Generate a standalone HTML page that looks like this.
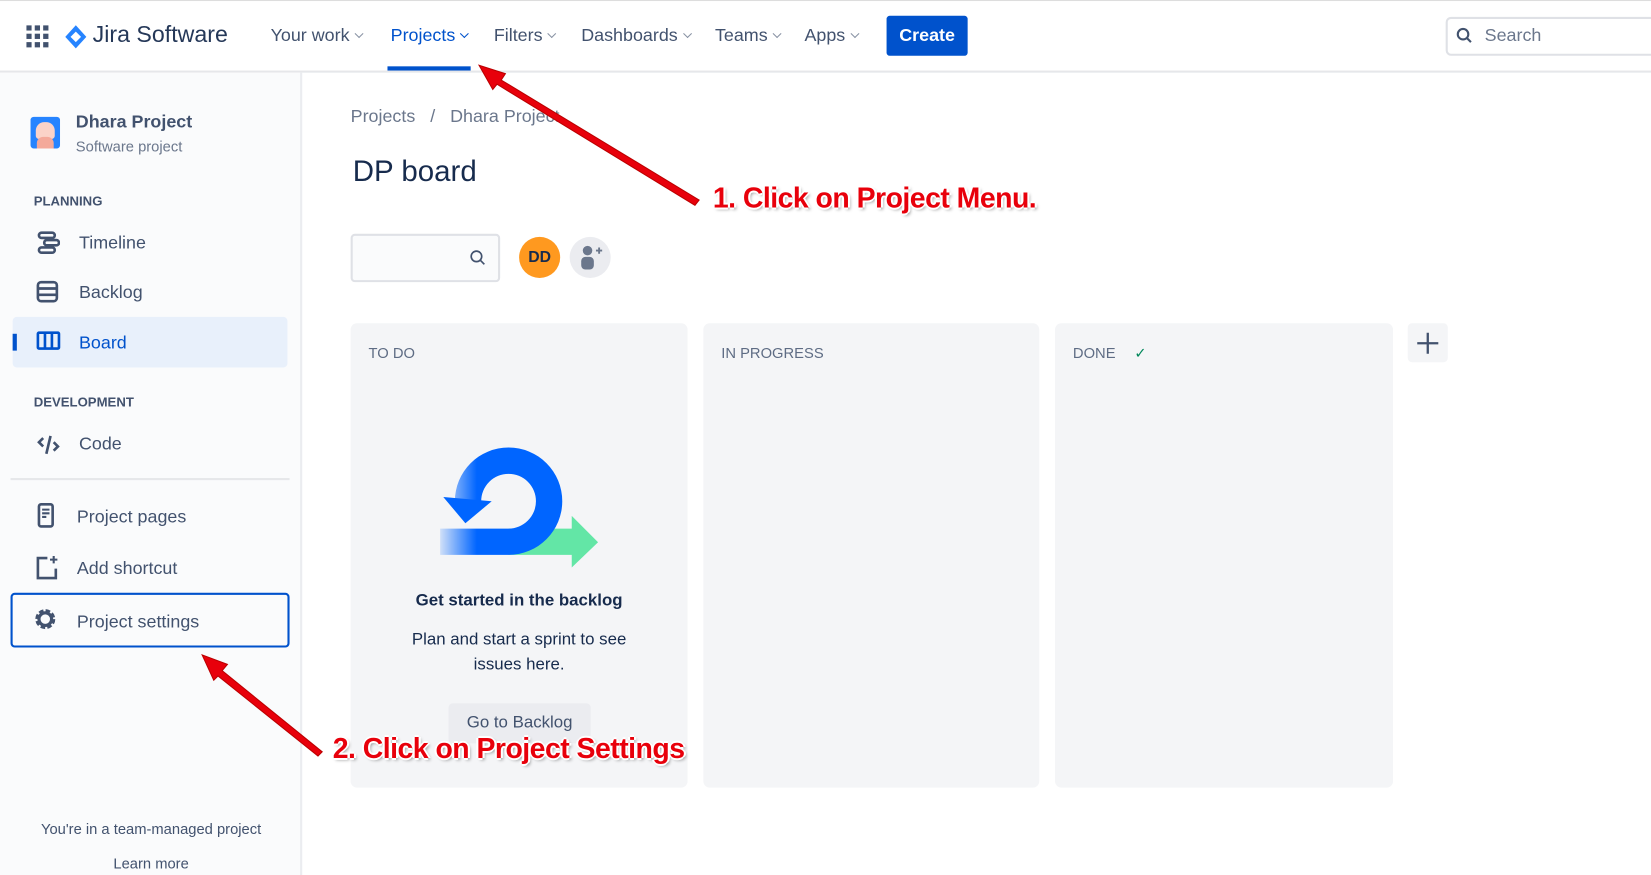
<!DOCTYPE html>
<html><head><meta charset="utf-8">
<style>
*{box-sizing:border-box;margin:0;padding:0}
html,body{width:1651px;height:875px;overflow:hidden;background:#fff}
#w{position:absolute;left:0;top:0;width:1568px;height:831px;transform:scale(1.05293);transform-origin:0 0;font-family:"Liberation Sans",sans-serif;color:#172b4d}
.a{position:absolute;white-space:nowrap}
.nav{font-size:17px;color:#42526e;top:24px}
.chev{display:inline-block;width:6px;height:6px;border-right:1.5px solid #8993a4;border-bottom:1.5px solid #8993a4;transform:rotate(45deg);margin-left:6px;position:relative;top:-4px}
.side{font-size:17px;color:#42526e}
.hd{font-size:12.5px;font-weight:bold;color:#42526e}
.col{position:absolute;top:307px;height:441px;background:#f4f5f7;border-radius:6px}
.colt{position:absolute;top:20px;left:17px;font-size:14px;color:#5e6c84}
.red{font-family:"Liberation Sans",sans-serif;font-weight:bold;font-size:27px;color:#e8000b;text-shadow:-2px 0 #fff,2px 0 #fff,0 -2px #fff,0 2px #fff,2px 2px 3px rgba(0,0,0,.4);letter-spacing:-0.5px}
</style></head><body><div id="w">
<div class="a" style="left:0;top:0;width:1568px;height:1px;background:#ddd"></div>
<div class="a" style="left:0;top:67px;width:1568px;height:2px;background:#e6e7ea"></div>
<svg class="a" style="left:25px;top:24px" width="22" height="22"><g fill="#42526e"><rect x="0" y="0" width="5" height="5"/><rect x="8" y="0" width="5" height="5"/><rect x="16" y="0" width="5" height="5"/><rect x="0" y="8" width="5" height="5"/><rect x="8" y="8" width="5" height="5"/><rect x="16" y="8" width="5" height="5"/><rect x="0" y="16" width="5" height="5"/><rect x="8" y="16" width="5" height="5"/><rect x="16" y="16" width="5" height="5"/></g></svg>
<svg class="a" style="left:61px;top:23px" width="22" height="24"><path d="M11 1 L21 12 L11 23 L1 12Z" fill="#2684ff"/><path d="M11 7 L16 12 L11 17 L6 12Z" fill="#fff"/></svg>
<div class="a" style="left:88px;top:20px;font-size:22px;color:#253858">Jira Software</div>
<div class="a nav" style="left:257px">Your work<span class="chev"></span></div>
<div class="a nav" style="left:371px;color:#0052cc">Projects<span class="chev" style="border-color:#0052cc"></span></div>
<div class="a" style="left:368px;top:63px;width:79px;height:4px;background:#0052cc"></div>
<div class="a nav" style="left:469px">Filters<span class="chev"></span></div>
<div class="a nav" style="left:552px">Dashboards<span class="chev"></span></div>
<div class="a nav" style="left:679px">Teams<span class="chev"></span></div>
<div class="a nav" style="left:764px">Apps<span class="chev"></span></div>
<div class="a" style="left:842px;top:15px;width:77px;height:38px;background:#0052cc;border-radius:3px;color:#fff;font-size:17px;font-weight:bold;text-align:center;line-height:38px">Create</div>
<div class="a" style="left:1373px;top:16px;width:220px;height:37px;border:2px solid #dfe1e6;border-radius:5px"></div>
<svg class="a" style="left:1383px;top:26px" width="16" height="16"><circle cx="6.5" cy="6.5" r="5" stroke="#42526e" stroke-width="2" fill="none"/><path d="M10 10 L14 14" stroke="#42526e" stroke-width="2"/></svg>
<div class="a" style="left:1410px;top:24px;font-size:17px;color:#6b778c">Search</div>
<div class="a" style="left:0;top:69px;width:287px;height:762px;background:#fafbfc;border-right:2px solid #ebecf0"></div>
<div class="a" style="left:29px;top:111px;width:28px;height:30px;background:#2684ff;border-radius:3px;overflow:hidden"><div style="position:absolute;left:5px;top:5px;width:18px;height:16px;background:#fbd3c8;border-radius:8px 8px 3px 3px"></div><div style="position:absolute;left:6px;top:19px;width:16px;height:12px;background:#f4a99a;border-radius:6px 6px 0 0"></div></div>
<div class="a" style="left:72px;top:106px;font-size:17px;font-weight:bold;color:#42526e">Dhara Project</div>
<div class="a" style="left:72px;top:131px;font-size:14px;color:#6b778c">Software project</div>
<div class="a hd" style="left:32px;top:184px">PLANNING</div>
<svg class="a" style="left:35px;top:219px" width="22" height="24" fill="none" stroke="#42526e" stroke-width="2.5"><rect x="2" y="2" width="15" height="5" rx="2.5"/><rect x="7" y="9" width="14" height="5" rx="2.5"/><rect x="2" y="16" width="15" height="5" rx="2.5"/></svg>
<div class="a side" style="left:75px;top:221px">Timeline</div>
<svg class="a" style="left:34px;top:266px" width="22" height="24" fill="none" stroke="#42526e" stroke-width="2.5"><rect x="2" y="2" width="18" height="18" rx="3"/><path d="M2 8H20M2 14H20"/></svg>
<div class="a side" style="left:75px;top:268px">Backlog</div>
<div class="a" style="left:12px;top:301px;width:261px;height:48px;background:#e8f0fb;border-radius:4px"></div>
<div class="a" style="left:12px;top:317px;width:4px;height:16px;background:#0052cc"></div>
<svg class="a" style="left:34px;top:314px" width="24" height="20" fill="none" stroke="#0052cc" stroke-width="2.5"><rect x="2" y="2" width="20" height="15" rx="1"/><path d="M8.7 2V17M15.3 2V17"/></svg>
<div class="a side" style="left:75px;top:316px;color:#0052cc">Board</div>
<div class="a hd" style="left:32px;top:375px">DEVELOPMENT</div>
<svg class="a" style="left:35px;top:411px" width="22" height="22" fill="none" stroke="#42526e" stroke-width="2.5"><path d="M6 5L2 9L6 13M16 9L20 13L16 17M13 3L9 20"/></svg>
<div class="a side" style="left:75px;top:412px">Code</div>
<div class="a" style="left:10px;top:454px;width:265px;height:2px;background:#e6e7ea"></div>
<svg class="a" style="left:35px;top:477px" width="18" height="26" fill="none" stroke="#42526e" stroke-width="2.5"><rect x="2" y="2" width="13" height="21" rx="2"/><path d="M5 7H12M5 10.5H12M5 14H9" stroke-width="2"/></svg>
<div class="a side" style="left:73px;top:481px">Project pages</div>
<svg class="a" style="left:33px;top:527px" width="24" height="26" fill="none" stroke="#42526e" stroke-width="2.5"><path d="M12 3H3V22H20V13"/><path d="M18 1V8M14.5 4.5H21.5" stroke-width="2"/></svg>
<div class="a side" style="left:73px;top:530px">Add shortcut</div>
<div class="a" style="left:10px;top:563px;width:265px;height:52px;border:2px solid #0052cc;border-radius:4px"></div>
<svg class="a" style="left:32px;top:577px" width="22" height="22"><circle cx="11" cy="11" r="7.5" fill="none" stroke="#42526e" stroke-width="4" stroke-dasharray="4 1.9"/><circle cx="11" cy="11" r="6" fill="none" stroke="#42526e" stroke-width="3"/></svg>
<div class="a side" style="left:73px;top:581px">Project settings</div>
<div class="a" style="left:0;width:287px;top:779px;text-align:center;font-size:14px;color:#42526e">You're in a team-managed project</div>
<div class="a" style="left:0;width:287px;top:812px;text-align:center;font-size:14px;color:#42526e">Learn more</div>
<div class="a" style="left:333px;top:101px;font-size:17px;color:#6b778c">Projects &nbsp;&nbsp;/&nbsp;&nbsp; Dhara Project</div>
<div class="a" style="left:335px;top:147px;font-size:28px;color:#172b4d">DP board</div>
<div class="a" style="left:333px;top:222px;width:142px;height:46px;border:2px solid #dfe1e6;border-radius:4px;background:#fafbfc"></div>
<svg class="a" style="left:446px;top:237px" width="16" height="16"><circle cx="6.5" cy="6.5" r="5" stroke="#42526e" stroke-width="1.6" fill="none"/><path d="M10 10L14 14" stroke="#42526e" stroke-width="1.6"/></svg>
<div class="a" style="left:493px;top:225px;width:39px;height:39px;border-radius:50%;background:#ff991f;text-align:center;line-height:39px;font-weight:bold;font-size:15px;color:#172b4d">DD</div>
<div class="a" style="left:541px;top:225px;width:39px;height:39px;border-radius:50%;background:#ebecf0"></div>
<svg class="a" style="left:550px;top:233px" width="22" height="24" fill="#6b778c"><circle cx="8" cy="5" r="4.5"/><rect x="2" y="11" width="12" height="12" rx="4"/><path d="M16 5H22M19 2V8" stroke="#6b778c" stroke-width="1.8"/></svg>
<div class="col" style="left:333px;width:320px"><div class="colt">TO DO</div></div>
<div class="col" style="left:668px;width:319px"><div class="colt">IN PROGRESS</div></div>
<div class="col" style="left:1002px;width:321px"><div class="colt">DONE <span style="color:#00875a;margin-left:14px">✓</span></div></div>
<div class="a" style="left:1337px;top:307px;width:38px;height:37px;background:#f4f5f7;border-radius:4px"></div>
<svg class="a" style="left:1345px;top:315px" width="22" height="22"><path d="M11 1V21M1 11H21" stroke="#42526e" stroke-width="2.2"/></svg>
<svg class="a" style="left:415px;top:420px" width="160" height="125">
<defs><linearGradient id="g" x1="0" x2="1"><stop offset="0" stop-color="#0065ff" stop-opacity=".15"/><stop offset=".3" stop-color="#0065ff"/><stop offset="1" stop-color="#0065ff"/></linearGradient></defs>
<path d="M68 82 H128 V70 L153 95 L128 119 V107 H68Z" fill="#63e6a6"/>
<path d="M3 82 H68 A26 26 0 1 0 42 56 L17 56 A51 51 0 1 1 68 107 H3Z" fill="url(#g)"/>
<path d="M6 52 L52 56 L27 77Z" fill="#0065ff"/>
</svg>
<div class="a" style="left:333px;width:320px;top:562px;text-align:center;font-size:16px;font-weight:bold;color:#172b4d">Get started in the backlog</div>
<div class="a" style="left:333px;width:320px;top:596px;text-align:center;font-size:16px;color:#172b4d;line-height:24px;white-space:normal;padding:0 50px">Plan and start a sprint to see issues here.</div>
<div class="a" style="left:426px;top:668px;width:135px;height:38px;background:#ebecf0;border-radius:4px;text-align:center;line-height:38px;font-size:16px;color:#42526e">Go to Backlog</div>
<svg class="a" style="left:0;top:0" width="1568" height="831">
<path d="M664 190 L476 76 L480 70 L455 62 L468 85 L472 80 L660 195Z" fill="#e8000b" stroke="#b00" stroke-width="1"/>
<path d="M306 714 L211 637 L216 631 L192 622 L203 646 L207 642 L302 718Z" fill="#e8000b" stroke="#b00" stroke-width="1"/>
</svg>
<div class="a red" style="left:677px;top:173px">1. Click on Project Menu.</div>
<div class="a red" style="left:316px;top:696px">2. Click on Project Settings</div>
</div></body></html>
